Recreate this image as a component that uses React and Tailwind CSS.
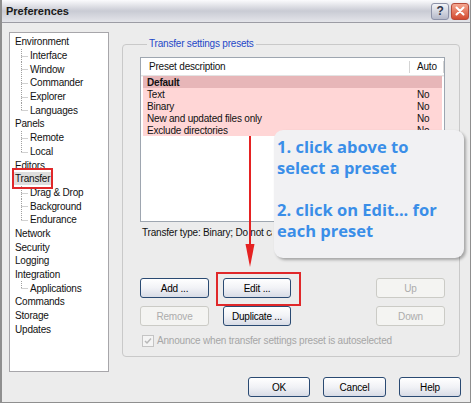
import React from 'react';

const tree = [
  { label: 'Environment', children: ['Interface', 'Window', 'Commander', 'Explorer', 'Languages'] },
  { label: 'Panels', children: ['Remote', 'Local'] },
  { label: 'Editors' },
  { label: 'Transfer', selected: true, children: ['Drag & Drop', 'Background', 'Endurance'] },
  { label: 'Network' },
  { label: 'Security' },
  { label: 'Logging' },
  { label: 'Integration', children: ['Applications'] },
  { label: 'Commands' },
  { label: 'Storage' },
  { label: 'Updates' },
];

const presets = [
  { name: 'Default', auto: '', bold: true },
  { name: 'Text', auto: 'No' },
  { name: 'Binary', auto: 'No' },
  { name: 'New and updated files only', auto: 'No' },
  { name: 'Exclude directories', auto: 'No' },
];

function Branch({ last }) {
  return (
    <svg width="16" height="13.7" className="shrink-0">
      <line x1="7.5" y1="0" x2="7.5" y2={last ? 7 : 13.7} stroke="#a0a0a0" strokeDasharray="1 1" />
      <line x1="7.5" y1="7.5" x2="14" y2="7.5" stroke="#a0a0a0" strokeDasharray="1 1" />
    </svg>
  );
}

function Btn({ children, w = 'w-[69px]', disabled }) {
  return (
    <div
      className={`${w} h-[20px] rounded-[3px] border flex items-center justify-center text-[10px] ${
        disabled
          ? 'border-[#cbcbc6] bg-[#f4f4f2] text-[#acacac]'
          : 'border-[#2a4a72] bg-gradient-to-b from-white via-[#f1f2f6] to-[#d8dce6] text-black'
      }`}
    >
      {children}
    </div>
  );
}

export default function App() {
  return (
    <div className="relative w-[474px] h-[405px] bg-white overflow-hidden font-['Liberation_Sans',Arial,sans-serif] tracking-[-0.2px]">
      <div className="w-[471px] h-[403px] flex flex-col border-l-[2px] border-r border-b border-[#8f8f8f] bg-[#ececec]">
        {/* Title bar */}
        <div className="h-[23px] shrink-0 flex items-center pl-[4px] pr-[1px] bg-gradient-to-b from-[#fbfbfd] via-[#c9cbd4] to-[#e4e5ea] border-b border-[#9c9ca4]">
          <span className="text-[11px] font-bold text-[#1a1a1a] tracking-normal">Preferences</span>
          <div className="ml-auto flex gap-[2px]">
            <div className="w-[18px] h-[17px] rounded-[3px] border border-[#8d92a8] bg-gradient-to-b from-[#f3f4f8] to-[#b5b9c9] flex items-center justify-center text-[12px] font-bold text-[#303548]">?</div>
            <div className="w-[18px] h-[17px] rounded-[3px] border border-[#b64a3a] bg-gradient-to-b from-[#f4a690] to-[#d2482e] flex items-center justify-center">
              <svg width="10" height="10" viewBox="0 0 10 10">
                <path d="M1.5 1.5 L8.5 8.5 M8.5 1.5 L1.5 8.5" stroke="white" strokeWidth="2" strokeLinecap="round" />
              </svg>
            </div>
          </div>
        </div>

        {/* Body */}
        <div className="flex pl-[7px] pt-[9px]">
          {/* Tree */}
          <div className="w-[100px] h-[340px] shrink-0 bg-white border border-[#a7a6aa] pt-[2px] text-[10px] text-[#111]">
            {tree.map((node) => (
              <div key={node.label}>
                <div className="h-[13.7px] flex items-center pl-[4px]">
                  {node.selected ? (
                    <span className="relative bg-[#dedede] px-[1px] leading-[13px]">
                      {node.label}
                      <span className="absolute -left-[2px] -right-[2px] -top-[4px] -bottom-[4px] border-2 border-[#e0282a]" />
                    </span>
                  ) : (
                    <span className="pl-[1px]">{node.label}</span>
                  )}
                </div>
                {node.children &&
                  node.children.map((c, i) => (
                    <div key={c} className="h-[13.7px] flex items-center pl-[4px]">
                      <Branch last={i === node.children.length - 1} />
                      <span>{c}</span>
                    </div>
                  ))}
              </div>
            ))}
          </div>

          {/* Right side */}
          <div className="ml-[13px] flex flex-col">
            <fieldset className="mt-[6px] w-[338px] h-[319px] border border-[#c9c9c9] rounded-[4px] pl-[17px]">
              <legend className="ml-[7px] px-[2px] text-[10px] leading-[12px] text-[#1f48c8]">Transfer settings presets</legend>

              {/* List view */}
              <div className="mt-[7px] w-[305px] h-[165px] bg-white border border-[#9ea6b0] text-[10px] text-[#111]">
                <div className="h-[18px] flex items-center border-b border-[#e3e3e3] shadow-[0_1px_0_#f2f2f2]">
                  <div className="w-[268px] pl-[8px]">Preset description</div>
                  <div className="w-px h-[12px] bg-[#d4d4d4]" />
                  <div className="flex-1 pl-[7px]">Auto</div>
                  <div className="w-px h-[12px] bg-[#d4d4d4]" />
                </div>
                <div className="mx-[2px]">
                  {presets.map((p) => (
                    <div key={p.name} className={`h-[12px] flex items-center ${p.bold ? 'bg-[#e7b6b8] font-bold' : 'bg-[#ffd6d6]'}`}>
                      <div className="w-[266px] pl-[4px] whitespace-nowrap">{p.name}</div>
                      <div className="flex-1 pl-[8px]">{p.auto}</div>
                    </div>
                  ))}
                </div>
              </div>

              <div className="mt-[5px] w-[132px] overflow-hidden h-[12px] leading-[12px] text-[10px] text-[#111] whitespace-nowrap pl-[2px]">
                Transfer type: Binary; Do not calculate...
              </div>

              {/* Buttons */}
              <div className="mt-[39px] w-[305px] flex flex-col gap-[8px]">
                <div className="flex">
                  <Btn>Add ...</Btn>
                  <div className="ml-[14px]"><Btn w="w-[68px]">Edit ...</Btn></div>
                  <div className="ml-auto"><Btn disabled>Up</Btn></div>
                </div>
                <div className="flex">
                  <Btn disabled>Remove</Btn>
                  <div className="ml-[14px]"><Btn w="w-[68px]">Duplicate ...</Btn></div>
                  <div className="ml-auto"><Btn disabled>Down</Btn></div>
                </div>
              </div>

              <div className="mt-[7px] flex items-center gap-[3px] text-[10px] text-[#a6a6a6]">
                <div className="ml-[2px] w-[12px] h-[12px] border border-[#c4c4c4] bg-[#f4f4f4] flex items-center justify-center">
                  <svg width="8" height="8" viewBox="0 0 8 8">
                    <path d="M1 4 L3 6 L7 1.5" stroke="#b8b8b8" strokeWidth="1.5" fill="none" />
                  </svg>
                </div>
                <span>Announce when transfer settings preset is autoselected</span>
              </div>
            </fieldset>
          </div>
        </div>

        {/* Bottom buttons */}
        <div className="mt-[5px] flex justify-end gap-[13px] pr-[9px]">
          <Btn w="w-[62px]">OK</Btn>
          <Btn w="w-[63px]">Cancel</Btn>
          <Btn w="w-[62px]">Help</Btn>
        </div>
      </div>

      {/* Annotations */}
      <svg className="absolute left-[244px] top-[136px]" width="12" height="131" viewBox="0 0 12 131">
        <line x1="6" y1="0" x2="6" y2="118" stroke="#e52222" strokeWidth="2" />
        <path d="M1.5 108 L6 131 L10.5 108 Z" fill="#e52222" />
      </svg>
      <div className="absolute left-[216px] top-[272px] w-[85px] h-[34px] border-2 border-[#e0282a]" />

      <div className="absolute left-[274px] top-[130px] w-[190px] h-[128px] rounded-[9px] bg-[#f1f1f3] shadow-[2px_2px_3px_rgba(0,0,0,0.3)] pl-[3px] pt-[6px] font-['Open_Sans',sans-serif] font-bold text-[16.5px] leading-[21px] text-[#3a8ee8] tracking-normal">
        <div>1. click above to</div>
        <div>select a preset</div>
        <div className="h-[21px]" />
        <div>2. click on Edit... for</div>
        <div>each preset</div>
      </div>
    </div>
  );
}
